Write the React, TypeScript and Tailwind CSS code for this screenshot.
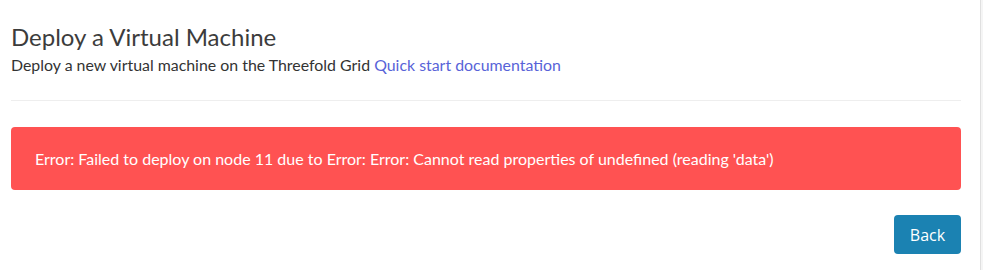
const App = () => {
  return (
    <div className="flex h-[270px] w-full bg-white font-['Lato','Liberation_Sans',sans-serif]">
      <div className="flex-1 pl-[11px] pr-[19px] pt-[22px]">
        <h1 className="text-[24px] leading-[30px] text-[#3c3c3c]">Deploy a Virtual Machine</h1>
        <p className="mt-[1px] text-[15.9px] leading-[24px] text-[#333]">
          Deploy a new virtual machine on the Threefold Grid{" "}
          <a href="#" className="text-[#5863d8]">
            Quick start documentation
          </a>
        </p>
        <div className="mt-[23px] h-px bg-[#eeeeee]" />
        <div className="mt-[26px] flex h-[63px] items-center rounded-[4px] bg-[#ff5252] px-[24px] text-[16px] text-white">
          Error: Failed to deploy on node 11 due to Error: Error: Cannot read properties of undefined (reading 'data')
        </div>
        <div className="mt-[25px] flex justify-end">
          <button className="h-[39px] w-[67px] rounded-[4px] bg-[#1b82b2] text-[16px] text-white font-['Open_Sans',sans-serif]">
            Back
          </button>
        </div>
      </div>
      <div className="w-[3px] border-l border-[#e0e0e0] bg-[#f5f5f5]" />
    </div>
  );
};

export default App;
